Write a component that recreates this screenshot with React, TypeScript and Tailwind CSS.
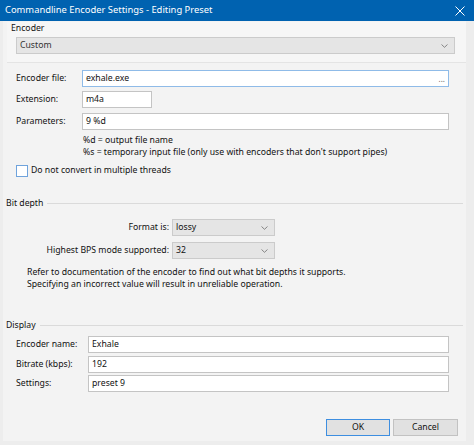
import React from "react";

const Chevron = () => (
  <svg width="7" height="4" viewBox="0 0 7 4" className="shrink-0">
    <path d="M0.5 0.5 L3.5 3.3 L6.5 0.5" fill="none" stroke="#7a7a7a" strokeWidth="0.9" />
  </svg>
);

const Combo = ({ value, className }: { value: string; className: string }) => (
  <div
    className={`h-[17px] flex items-center justify-between bg-[#e5e5e5] border border-[#cbcbcb] pl-[3px] pr-[6px] ${className}`}
  >
    <span>{value}</span>
    <Chevron />
  </div>
);

const TextBox = ({ value, className }: { value: string; className: string }) => (
  <div className={`h-[17px] flex items-center bg-white border border-[#c4c4c4] pl-[3px] ${className}`}>
    {value}
  </div>
);

const GroupHeader = ({ title, className }: { title: string; className: string }) => (
  <div className={`flex items-center leading-[12px] ml-[3px] ${className}`}>
    <span>{title}</span>
    <div className="flex-1 ml-[4px] mr-[3px] border-t border-[#dadada]" />
  </div>
);

export default function App() {
  return (
    <div className="w-[474px] h-[445px] bg-[#ededed] flex flex-col font-['Segoe_UI','Noto_Sans',sans-serif] text-[8.7px] text-[#111]">
      {/* title bar */}
      <div className="h-[21px] shrink-0 bg-[#0062b0] flex items-center justify-between pl-[5px] pr-[9px] text-white text-[9.4px]">
        <span>Commandline Encoder Settings - Editing Preset</span>
        <svg width="10" height="10" viewBox="0 0 10 10">
          <path d="M0.5 0.5 L9.5 9.5 M9.5 0.5 L0.5 9.5" stroke="white" strokeWidth="1" />
        </svg>
      </div>

      <div className="flex-1 ml-[3px] mr-[8px] mb-[4px] bg-[#f3f3f3] flex flex-col">
        {/* encoder group */}
        <div className="mt-[1px] ml-[4px] h-[41px] bg-[#f6f6f6] border-b border-[#e4e4e4] flex flex-col">
          <div className="pl-[4px] leading-[12px]">Encoder</div>
          <Combo value="Custom" className="mt-[3px] ml-[9px] w-[439px] text-[#333]" />
        </div>

        <div className="pl-[13px] flex flex-col">
          <div className="mt-[7px] flex items-center">
            <span className="w-[66px]">Encoder file:</span>
            <div className="h-[17px] w-[367px] flex items-center justify-between bg-white border border-[#8fbbe8] pl-[3px] pr-[3px]">
              <span>exhale.exe</span>
              <span className="text-[#666] text-[8px]">...</span>
            </div>
          </div>
          <div className="mt-[4px] flex items-center">
            <span className="w-[66px]">Extension:</span>
            <TextBox value="m4a" className="w-[70px]" />
          </div>
          <div className="mt-[5px] flex items-center">
            <span className="w-[66px]">Parameters:</span>
            <TextBox value="9 %d" className="w-[367px]" />
          </div>
          <div className="mt-[4px] ml-[67px] leading-[12px]">
            <div>%d = output file name</div>
            <div>%s = temporary input file (only use with encoders that don't support pipes)</div>
          </div>
          <div className="mt-[7px] flex items-center h-[12px]">
            <div className="w-[12px] h-[12px] bg-white border border-[#6fa3dc]" />
            <span className="ml-[3px]">Do not convert in multiple threads</span>
          </div>
        </div>

        <GroupHeader title="Bit depth" className="mt-[20px]" />

        <div className="mt-[10px] flex items-center">
          <span className="w-[166px] text-right">Format is:</span>
          <Combo value="lossy" className="ml-[3px] w-[103px]" />
        </div>
        <div className="mt-[6px] flex items-center">
          <span className="w-[166px] text-right">Highest BPS mode supported:</span>
          <Combo value="32" className="ml-[3px] w-[103px]" />
        </div>
        <div className="mt-[7px] ml-[24px] leading-[12px]">
          <div>Refer to documentation of the encoder to find out what bit depths it supports.</div>
          <div>Specifying an incorrect value will result in unreliable operation.</div>
        </div>

        <GroupHeader title="Display" className="mt-[29px]" />

        <div className="pl-[13px] flex flex-col">
          <div className="mt-[5px] flex items-center">
            <span className="w-[72px]">Encoder name:</span>
            <TextBox value="Exhale" className="w-[361px]" />
          </div>
          <div className="mt-[3px] flex items-center">
            <span className="w-[72px]">Bitrate (kbps):</span>
            <TextBox value="192" className="w-[361px]" />
          </div>
          <div className="mt-[2px] flex items-center">
            <span className="w-[72px]">Settings:</span>
            <TextBox value="preset 9" className="w-[361px]" />
          </div>
        </div>

        <div className="mt-[27px] mr-[8px] flex justify-end gap-[3px]">
          <button className="w-[64px] h-[17px] bg-[#e1e1e1] border border-[#3d8ee0] flex items-center justify-center">
            OK
          </button>
          <button className="w-[65px] h-[17px] bg-[#e1e1e1] border border-[#c2c2c2] flex items-center justify-center">
            Cancel
          </button>
        </div>
      </div>
    </div>
  );
}
